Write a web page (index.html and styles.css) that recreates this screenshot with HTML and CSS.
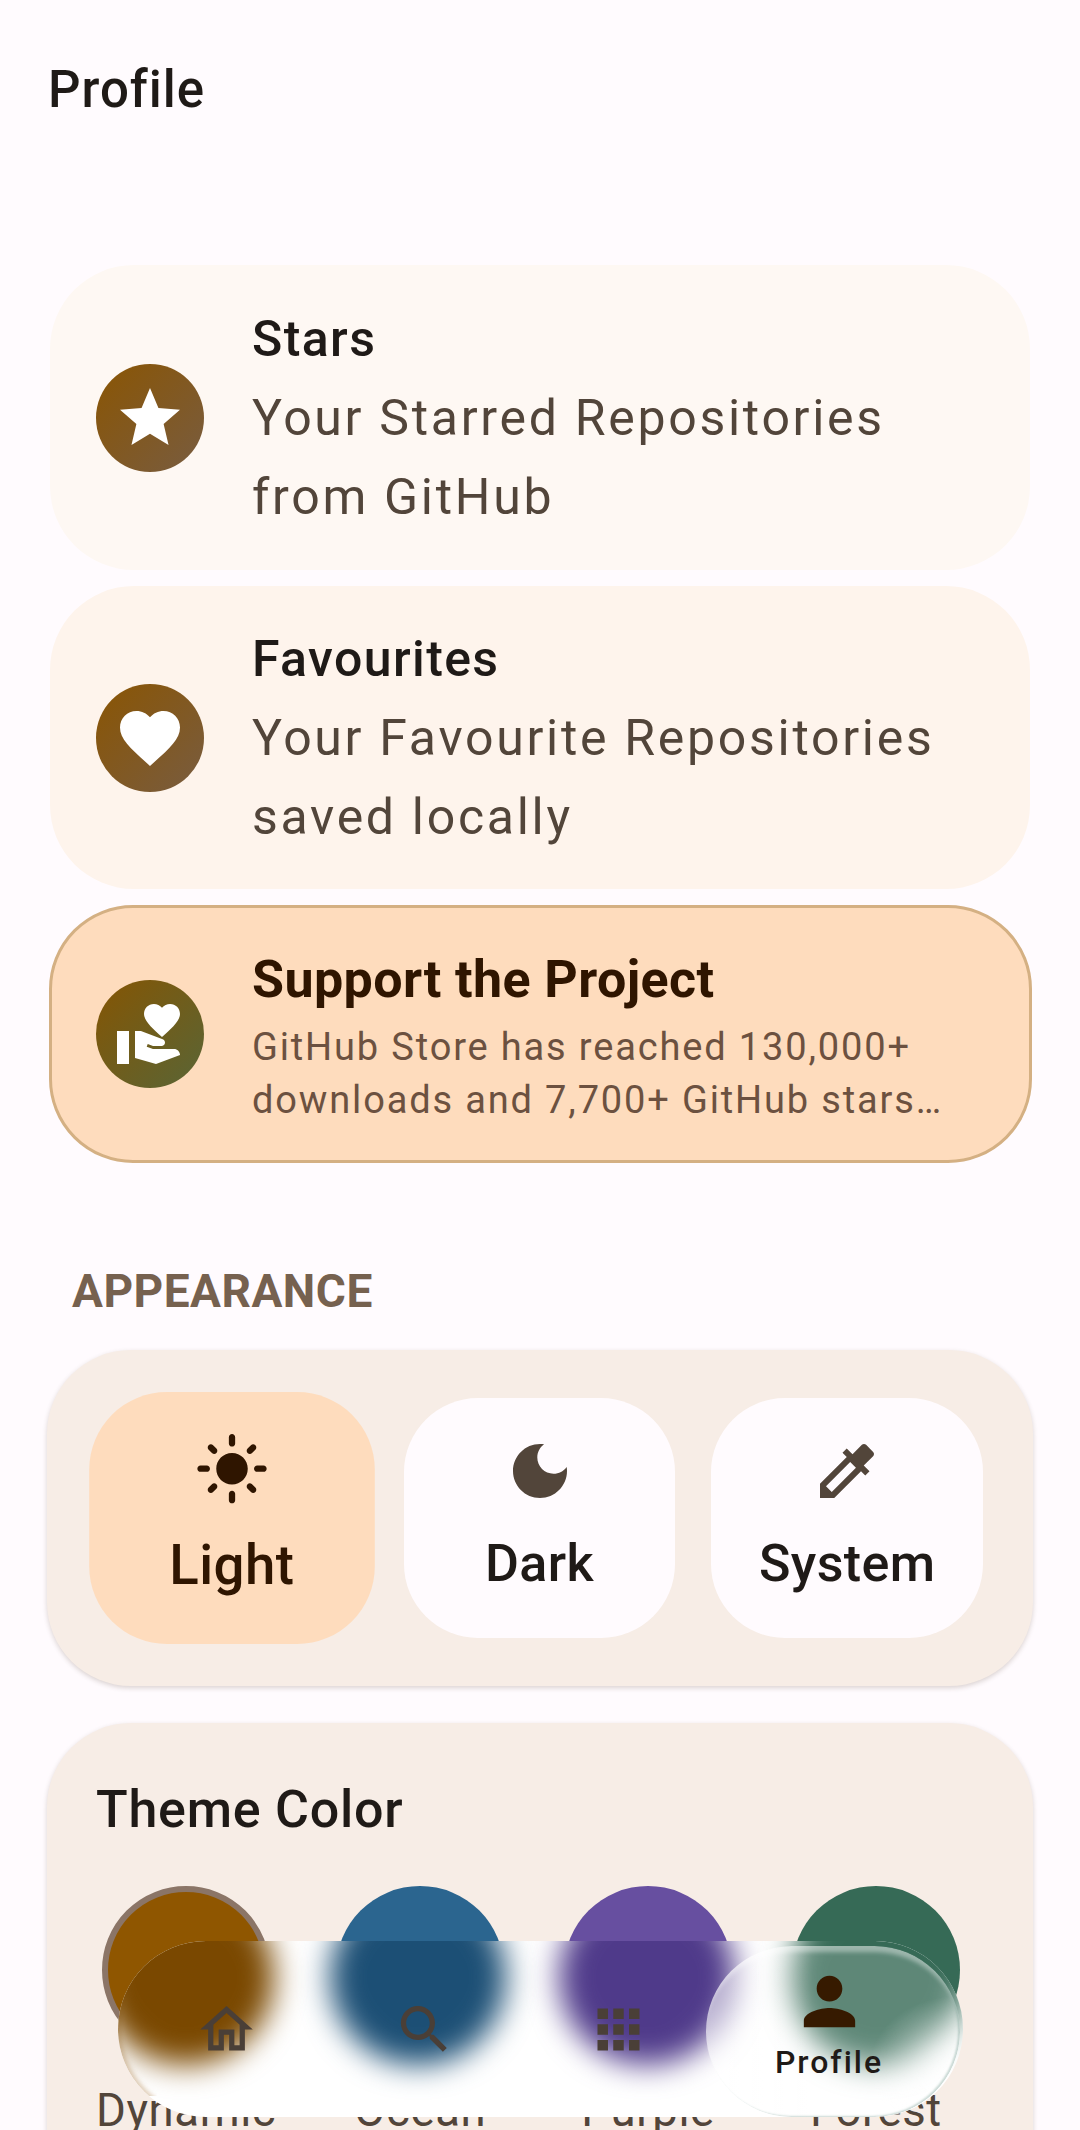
FILE: index.html
```html
<!DOCTYPE html>
<html lang="en">
<head>
  <meta charset="UTF-8" />
  <meta name="viewport" content="width=device-width, initial-scale=1.0"/>
  <title>Profile</title>
  <link rel="stylesheet" href="styles.css">
</head>
<body>
  <div class="screen">
    <header class="topbar">
      <h1>Profile</h1>
    </header>

    <!-- LINKS -->
    <section class="links">
      <div class="link-card stars">
        <div class="badge">
          <svg viewBox="0 0 24 24"><path d="M12 17.27L18.18 21l-1.64-7.03L22 9.24l-7.19-.61L12 2 9.19 8.63 2 9.24l5.46 4.73L5.82 21z"/></svg>
        </div>
        <div class="link-text">
          <h2>Stars</h2>
          <p>Your Starred Repositories from GitHub</p>
        </div>
      </div>

      <div class="link-card favourites">
        <div class="badge">
          <svg viewBox="0 0 24 24"><path d="M12 21.35l-1.45-1.32C5.4 15.36 2 12.28 2 8.5 2 5.42 4.42 3 7.5 3c1.74 0 3.41.81 4.5 2.09C13.09 3.81 14.76 3 16.5 3 19.58 3 22 5.42 22 8.5c0 3.78-3.4 6.86-8.55 11.54L12 21.35z"/></svg>
        </div>
        <div class="link-text">
          <h2>Favourites</h2>
          <p>Your Favourite Repositories saved locally</p>
        </div>
      </div>

      <div class="link-card support">
        <div class="badge">
          <svg viewBox="0 0 24 24"><path d="M1 11h4v11H1zm15-7.75C16.65 2.49 17.66 2 18.7 2 20.55 2 22 3.45 22 5.3c0 2.27-2.91 4.99-6 7.7-3.09-2.71-6-5.43-6-7.7C10 3.45 11.45 2 13.3 2c1.04 0 2.05.49 2.7 1.25zM20 17h-7l-2.09-.73.33-.94L13 16h2.82c.65 0 1.18-.53 1.18-1.18 0-.49-.31-.93-.77-1.11L8.97 11H7v9.02L14 22l8.01-3c-.01-1.1-.9-2-2.01-2z"/></svg>
        </div>
        <div class="link-text">
          <h2>Support the Project</h2>
          <p>GitHub Store has reached 130,000+ downloads and 7,700+ GitHub stars…</p>
        </div>
      </div>
    </section>

    <!-- APPEARANCE -->
    <h3 class="section-label">APPEARANCE</h3>

    <section class="panel modes">
      <div class="mode selected">
        <svg viewBox="0 0 24 24"><path d="M12 7c-2.76 0-5 2.24-5 5s2.24 5 5 5 5-2.24 5-5-2.24-5-5-5zM2 13h2c.55 0 1-.45 1-1s-.45-1-1-1H2c-.55 0-1 .45-1 1s.45 1 1 1zm18 0h2c.55 0 1-.45 1-1s-.45-1-1-1h-2c-.55 0-1 .45-1 1s.45 1 1 1zM11 2v2c0 .55.45 1 1 1s1-.45 1-1V2c0-.55-.45-1-1-1s-1 .45-1 1zm0 18v2c0 .55.45 1 1 1s1-.45 1-1v-2c0-.55-.45-1-1-1s-1 .45-1 1zM5.99 4.58c-.39-.39-1.03-.39-1.41 0-.39.39-.39 1.03 0 1.41l1.06 1.06c.39.39 1.03.39 1.41 0s.39-1.03 0-1.41L5.99 4.58zm12.37 12.37c-.39-.39-1.03-.39-1.41 0-.39.39-.39 1.03 0 1.41l1.06 1.06c.39.39 1.03.39 1.41 0 .39-.39.39-1.03 0-1.41l-1.06-1.06zm1.06-10.96c.39-.39.39-1.03 0-1.41-.39-.39-1.03-.39-1.41 0l-1.06 1.06c-.39.39-.39 1.03 0 1.41s1.03.39 1.41 0l1.06-1.06zM7.05 18.36c.39-.39.39-1.03 0-1.41-.39-.39-1.03-.39-1.41 0l-1.06 1.06c-.39.39-.39 1.03 0 1.41s1.03.39 1.41 0l1.06-1.06z"/></svg>
        <span>Light</span>
      </div>
      <div class="mode">
        <svg viewBox="0 0 24 24"><path d="M12 3c-4.97 0-9 4.03-9 9s4.03 9 9 9 9-4.03 9-9c0-.46-.04-.92-.1-1.36-.98 1.37-2.58 2.26-4.4 2.26-2.98 0-5.4-2.42-5.4-5.4 0-1.81.89-3.42 2.26-4.4-.44-.06-.9-.1-1.36-.1z"/></svg>
        <span>Dark</span>
      </div>
      <div class="mode">
        <svg viewBox="0 0 24 24"><path d="M20.71 5.63l-2.34-2.34c-.39-.39-1.02-.39-1.41 0l-3.12 3.12-1.93-1.91-1.41 1.41 1.42 1.42L3 16.25V21h4.75l8.92-8.92 1.42 1.42 1.41-1.41-1.92-1.92 3.12-3.12c.4-.4.4-1.03.01-1.42zM6.92 19L5 17.08l8.06-8.06 1.92 1.92L6.92 19z"/></svg>
        <span>System</span>
      </div>
    </section>

    <!-- THEME COLOR -->
    <section class="panel theme">
      <h2>Theme Color</h2>
      <div class="swatches">
        <div class="swatch"><div class="dot dynamic"></div><span>Dynamic</span></div>
        <div class="swatch"><div class="dot ocean"></div><span>Ocean</span></div>
        <div class="swatch"><div class="dot purple"></div><span>Purple</span></div>
        <div class="swatch"><div class="dot forest"></div><span>Forest</span></div>
      </div>
    </section>

    <!-- BARRA INFERIOR: vidrio sobre el contenido -->
    <nav class="bottom-nav">
      <div class="blob blob-brown"></div>
      <div class="blob blob-blue"></div>
      <div class="blob blob-purple"></div>
      <div class="blob blob-green"></div>

      <div class="nav-item">
        <svg viewBox="0 0 24 24"><path d="M12 5.69l5 4.5V18h-2v-6H9v6H7v-7.81l5-4.5M12 3L2 12h3v8h6v-6h2v6h6v-8h3L12 3z"/></svg>
      </div>
      <div class="nav-item nav-search">
        <svg viewBox="0 0 24 24"><path d="M15.5 14h-.79l-.28-.27C15.41 12.59 16 11.11 16 9.5 16 5.91 13.09 3 9.5 3S3 5.91 3 9.5 5.91 16 9.5 16c1.61 0 3.09-.59 4.23-1.57l.27.28v.79l5 4.99L20.49 19l-4.99-5zm-6 0C7.01 14 5 11.99 5 9.5S7.01 5 9.5 5 14 7.01 14 9.5 11.99 14 9.5 14z"/></svg>
      </div>
      <div class="nav-item">
        <svg viewBox="0 0 24 24"><path d="M4 8h4V4H4v4zm6 12h4v-4h-4v4zm-6 0h4v-4H4v4zm0-6h4v-4H4v4zm6 0h4v-4h-4v4zm6-10v4h4V4h-4zm-6 4h4V4h-4v4zm6 6h4v-4h-4v4zm0 6h4v-4h-4v4z"/></svg>
      </div>
      <div class="nav-item active">
        <svg viewBox="0 0 24 24"><path d="M12 12c2.21 0 4-1.79 4-4s-1.79-4-4-4-4 1.79-4 4 1.79 4 4 4zm0 2c-2.67 0-8 1.34-8 4v2h16v-2c0-2.66-5.33-4-8-4z"/></svg>
        <span>Profile</span>
      </div>
    </nav>
  </div>
</body>
</html>
```

FILE: styles.css
```css
* {
  margin: 0;
  padding: 0;
  box-sizing: border-box;
}

body {
  background: #fffbfe;
  font-family: Roboto, "Liberation Sans", sans-serif;
  color: #1f1a17;
}

.screen {
  position: relative;
  height: 2130px;
  overflow: hidden;
}

/* Cabecera */
.topbar {
  height: 178px;
  margin-bottom: 87px;
  padding-left: 48px;
  display: flex;
  align-items: center;
}

.topbar h1 {
  font-size: 51px;
  font-weight: 500;
  letter-spacing: 1px;
}

/* Tarjetas de enlace */
.links {
  margin: 0 50px;
  display: flex;
  flex-direction: column;
  gap: 16px;
}

.link-card {
  display: flex;
  align-items: center;
  gap: 48px;
  height: 305px;
  padding: 0 46px;
  border-radius: 84px;
}

.stars { background: #fef8f3; }
.favourites { background: #fef4ec; height: 303px; }

.support {
  height: 258px;
  margin: 0 -2px 0 -1px;
  padding: 0 44px;
  background: #fedcbd;
  border: 3px solid #d4b083;
}

.badge {
  flex: none;
  width: 108px;
  height: 108px;
  border-radius: 50%;
  display: flex;
  justify-content: center;
  align-items: center;
  background: linear-gradient(135deg, #8a5503, #785c40);
}

.support .badge {
  background: linear-gradient(135deg, #855503, #596536);
}

.badge svg {
  width: 72px;
  height: 72px;
  fill: #fff;
}

.link-text {
  padding-top: 2px;
}

.link-text h2 {
  font-size: 50px;
  line-height: 79px;
  font-weight: 500;
  letter-spacing: 1.4px;
}

.link-text p {
  font-size: 50px;
  line-height: 79px;
  letter-spacing: 2.7px;
  color: #52453a;
}

.support .link-text {
  padding-top: 6px;
}

.support h2 {
  font-size: 52px;
  font-weight: 700;
  line-height: 66px;
  letter-spacing: 0.4px;
  color: #2f1500;
}

.support p {
  font-size: 38px;
  line-height: 53px;
  letter-spacing: 1.85px;
  color: #6c5140;
  margin-top: 8px;
}

/* Apariencia */
.section-label {
  height: 187px;
  padding: 101px 0 0 72px;
  font-size: 46px;
  font-weight: 700;
  line-height: 54px;
  letter-spacing: 0.5px;
  color: #76614f;
}

.panel {
  margin: 0 47px;
  background: #f7ede6;
  border-radius: 84px;
  box-shadow: 0 2px 5px rgba(70, 50, 30, 0.2);
}

.modes {
  display: flex;
  gap: 36px;
  padding: 48px 50px 48px 49px;
}

.mode {
  flex: 1;
  height: 240px;
  border-radius: 74px;
  background: #fffbfe;
  display: flex;
  flex-direction: column;
  align-items: center;
  padding-top: 37px;
}

.mode svg {
  width: 72px;
  height: 72px;
  fill: #52453a;
}

.mode span {
  margin-top: 24px;
  font-size: 52px;
  font-weight: 500;
  line-height: 66px;
  letter-spacing: 0.4px;
}

.mode.selected {
  background: #fedcbd;
  transform: scale(1.05);
  color: #2f1500;
}

.mode.selected svg {
  fill: #2f1500;
}

/* Color de tema */
.theme {
  margin-top: 37px;
  height: 500px;
  padding: 50px 73px 0 49px;
}

.theme h2 {
  font-size: 52px;
  font-weight: 500;
  line-height: 74px;
  letter-spacing: 0.75px;
}

.swatches {
  margin-top: 39px;
  display: flex;
  justify-content: space-between;
}

.swatch {
  display: flex;
  flex-direction: column;
  align-items: center;
  min-width: 168px;
}

.swatch span {
  margin-top: 27px;
  font-size: 45.5px;
  line-height: 60px;
  letter-spacing: 0.6px;
  color: #52453a;
}

.dot {
  width: 168px;
  height: 168px;
  border-radius: 50%;
}

.dynamic { background: #8f5600; border: 6px solid #8b7567; }
.ocean { background: #2b658f; }
.purple { background: #674fa0; }
.forest { background: #366a56; }

/* Barra inferior */
.bottom-nav {
  position: absolute;
  left: 118px;
  top: 1941px;
  width: 845px;
  height: 176px;
  background: #fff;
  border-radius: 88px;
  overflow: hidden;
  display: flex;
  padding-left: 10px;
}

/* Reflejo marron en el borde izquierdo */
.bottom-nav::before {
  content: "";
  position: absolute;
  left: 0;
  top: 0;
  width: 176px;
  height: 176px;
  border-radius: 50%;
  box-shadow: inset 3px -1px 4px rgba(170, 120, 60, 0.35);
  clip-path: inset(0 78% 12% 0);
}

.blob {
  position: absolute;
  top: -52px;
  width: 176px;
  height: 176px;
  border-radius: 50%;
  filter: blur(15px);
}

.blob-brown { left: -20px; background: #7a4800; }
.blob-blue { left: 212px; background: #1c4f75; }
.blob-purple { left: 441px; background: #4f3a8a; }
.blob-green { left: 672px; background: #366a56; }

.nav-item {
  position: relative;
  flex: 0 0 196px;
  display: flex;
  flex-direction: column;
  align-items: center;
  padding-top: 57px;
}

.nav-search {
  padding-left: 5px;
}

.nav-item svg {
  width: 63px;
  height: 63px;
  fill: #4a3f37;
}

.nav-item.active {
  flex: 1;
  margin: 5px 3px 0 -10px;
  padding: 17px 8px 0 0;
  border-radius: 88px;
  background:
    radial-gradient(ellipse 90px 70px at 100% 70%, rgba(255, 255, 255, 0.75), rgba(255, 255, 255, 0)),
    linear-gradient(90deg, rgba(255, 255, 255, 0.6), rgba(255, 255, 255, 0.2) 42%);
  box-shadow: inset 0 10px 4px -4px rgba(255, 255, 255, 0.4), inset -2px -1px 2px rgba(80, 130, 115, 0.3);
}

.nav-item.active svg {
  width: 77px;
  height: 77px;
  fill: #361a00;
}

.nav-item.active span {
  margin-top: 2px;
  font-size: 32px;
  font-weight: 500;
  line-height: 40px;
  letter-spacing: 2px;
  color: #1f1a17;
}
```
